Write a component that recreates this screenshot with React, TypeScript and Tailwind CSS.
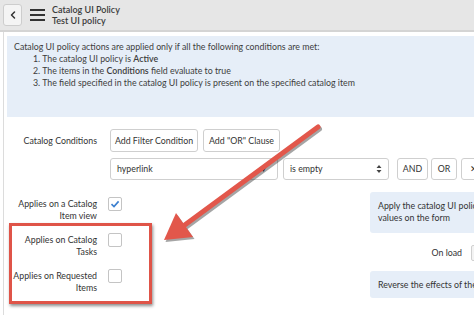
import { ChevronLeft } from 'lucide-react';

function Btn({ w, children }: { w: string; children: React.ReactNode }) {
  return (
    <div
      className={`${w} h-[23px] shrink-0 flex items-center justify-center border border-[#cfcfcf] rounded-[3px] bg-white text-[#333] whitespace-nowrap`}
    >
      {children}
    </div>
  );
}

function Check({ checked }: { checked?: boolean }) {
  return (
    <div className="w-[14px] h-[14px] shrink-0 border border-[#c4c4c4] rounded-[2px] bg-white flex items-center justify-center">
      {checked && (
        <svg width="10" height="10" viewBox="0 0 10 10">
          <path d="M1.5 5.2 L4 7.6 L8.6 2.4" fill="none" stroke="#3b7fcf" strokeWidth="1.6" />
        </svg>
      )}
    </div>
  );
}

function CheckRow({ label, checked, lw }: { label: string[]; checked?: boolean; lw: string }) {
  return (
    <div className="flex items-start">
      <div className={`${lw} shrink-0 text-right leading-[12px] pt-[1px] text-[#333] whitespace-nowrap`}>
        {label.map((l) => (
          <div key={l}>{l}</div>
        ))}
      </div>
      <div className="ml-[11px]">
        <Check checked={checked} />
      </div>
    </div>
  );
}

export default function App() {
  return (
    <div className="relative w-[474px] h-[315px] overflow-hidden bg-white flex flex-col text-[8.8px] font-['Lato',sans-serif]">
      <header className="h-[32px] shrink-0 flex items-center bg-[#e6e6e6] border-b-2 border-[#d4d4d4]">
        <div className="ml-[3px] w-[19px] h-[22px] flex items-center justify-center bg-[#f4f4f4] border border-[#cdcdcd] rounded-[3px]">
          <ChevronLeft size={12} strokeWidth={3} className="text-[#333]" />
        </div>
        <div className="ml-[8px] flex flex-col gap-[3px]">
          <span className="block w-[15px] h-[2px] bg-[#333]" />
          <span className="block w-[15px] h-[2px] bg-[#333]" />
          <span className="block w-[15px] h-[2px] bg-[#333]" />
        </div>
        <div className="ml-[7px] leading-[11px] font-semibold text-[#3a3a3a] text-[9px]">
          <div>Catalog UI Policy</div>
          <div>Test UI policy</div>
        </div>
      </header>

      <div className="flex-1 ml-[3px] border-l border-[#dcdcdc] pl-[3px] pt-[4px]">
        <div className="h-[81px] bg-[#e6eef8] pl-[7px] pt-[5px] leading-[12px] text-[#3d3d3d] whitespace-nowrap">
          <div>Catalog UI policy actions are applied only if all the following conditions are met:</div>
          <ol className="ml-[19px]">
            <li>
              1. The catalog UI policy is <b className="font-semibold">Active</b>
            </li>
            <li>
              2. The items in the <b className="font-semibold">Conditions</b> field evaluate to true
            </li>
            <li>3. The field specified in the catalog UI policy is present on the specified catalog item</li>
          </ol>
        </div>

        <div className="mt-[12px] flex items-start">
          <div className="w-[90px] shrink-0 h-[23px] flex items-center justify-end text-[#333] whitespace-nowrap">
            Catalog Conditions
          </div>
          <div className="ml-[13px] flex flex-col gap-[6px]">
            <div className="flex gap-[5px]">
              <Btn w="w-[88px]">Add Filter Condition</Btn>
              <Btn w="w-[77px]">Add "OR" Clause</Btn>
            </div>
            <div className="flex items-center">
              <div className="w-[168px] shrink-0 h-[22px] flex items-center justify-between px-[6px] border border-[#cfcfcf] rounded-[3px] text-[#333]">
                <span>hyperlink</span>
                <span className="text-[7px] pr-[4px]">▼</span>
              </div>
              <div className="ml-[5px] w-[106px] shrink-0 h-[22px] flex items-center justify-between px-[6px] border border-[#cfcfcf] rounded-[3px] text-[#333]">
                <span>is empty</span>
                <svg width="6" height="10" viewBox="0 0 6 10">
                  <path d="M0.5 4 L3 1 L5.5 4 Z M0.5 6 L3 9 L5.5 6 Z" fill="#444" />
                </svg>
              </div>
              <div className="ml-[8px] w-[31px] shrink-0 h-[22px] flex items-center justify-center border border-[#cfcfcf] rounded-[3px] text-[#333]">
                AND
              </div>
              <div className="ml-[3px] w-[26px] shrink-0 h-[22px] flex items-center justify-center border border-[#cfcfcf] rounded-[3px] text-[#333]">
                OR
              </div>
              <div className="ml-[4px] w-[26px] shrink-0 h-[22px] flex items-center justify-center border border-[#cfcfcf] rounded-[3px] text-[#333]">
                ✕
              </div>
            </div>
          </div>
        </div>

        <div className="mt-[12px] flex items-start">
          <div className="w-[363px] shrink-0 pt-[5px]">
            <CheckRow lw="w-[90px]" label={['Applies on a Catalog', 'Item view']} checked />
            <div className="mt-[1px] ml-[2px] w-[143px] border-[3px] border-[#df5448] shadow-[1px_2px_3px_rgba(0,0,0,0.45)] pt-[7px] pb-[7px] flex flex-col gap-[11px]">
              <CheckRow lw="w-[85px]" label={['Applies on Catalog', 'Tasks']} />
              <CheckRow lw="w-[85px]" label={['Applies on Requested', 'Items']} />
            </div>
          </div>
          <div className="w-[140px] shrink-0 text-[#333]">
            <div className="h-[41px] bg-[#e6eef8] rounded-[3px] pl-[8px] pt-[8px] leading-[12px] whitespace-nowrap">
              <div>Apply the catalog UI policy</div>
              <div>values on the form</div>
            </div>
            <div className="mt-[12px] flex items-center h-[16px]">
              <div className="w-[92px] text-right">On load</div>
              <div className="ml-[9px] w-[30px] h-[16px] border border-[#d0d0d0] rounded-[2px] bg-[#f3f3f3]" />
            </div>
            <div className="mt-[10px] h-[27px] bg-[#e6eef8] rounded-[3px] pl-[8px] flex items-center whitespace-nowrap">
              Reverse the effects of the policy
            </div>
          </div>
        </div>
      </div>

      <svg className="absolute left-0 top-0 pointer-events-none" width="474" height="315" viewBox="0 0 474 315">
        <g transform="translate(1.5 2)" fill="#000" opacity="0.35">
          <line x1="318" y1="127" x2="182" y2="227" stroke="#000" strokeWidth="5" strokeLinecap="round" />
          <polygon points="164,240 176,213 193,237" />
        </g>
        <line x1="318" y1="127" x2="182" y2="227" stroke="#e2574b" strokeWidth="5" strokeLinecap="round" />
        <polygon points="164,240 176,213 193,237" fill="#e2574b" />
      </svg>
    </div>
  );
}
